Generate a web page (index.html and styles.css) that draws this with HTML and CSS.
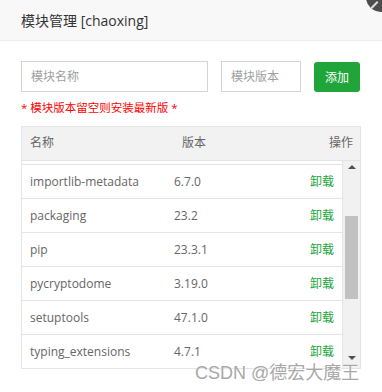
FILE: index.html
```html
<!DOCTYPE html>
<html lang="zh-CN">
  <head>
    <meta charset="UTF-8" />
    <meta name="viewport" content="width=device-width, initial-scale=1.0" />
    <title>模块管理</title>
    <link rel="stylesheet" href="styles.css">
  </head>
  <body>
    <div class="layer">
      <div class="layer-title">模块管理 [chaoxing]</div>
      <span class="layer-close"></span>

      <div class="layer-content">
        <div class="form-row">
          <input class="input input-name" type="text" placeholder="模块名称" />
          <input class="input input-version" type="text" placeholder="模块版本" />
          <button class="btn btn-success">添加</button>
        </div>
        <p class="tips">* 模块版本留空则安装最新版 *</p>

        <div class="table-box">
          <table class="table table-head">
            <colgroup>
              <col class="col-name" />
              <col class="col-version" />
              <col />
            </colgroup>
            <thead>
              <tr>
                <th>名称</th>
                <th>版本</th>
                <th class="text-right">操作</th>
              </tr>
            </thead>
          </table>

          <div class="table-body">
            <div class="table-scroll">
              <table class="table">
                <colgroup>
                  <col class="col-name" />
                  <col class="col-version" />
                  <col />
                </colgroup>
                <tbody>
                  <tr><td>importlib-metadata</td><td>6.7.0</td><td class="text-right"><a class="btlink">卸载</a></td></tr>
                  <tr><td>packaging</td><td>23.2</td><td class="text-right"><a class="btlink">卸载</a></td></tr>
                  <tr><td>pip</td><td>23.3.1</td><td class="text-right"><a class="btlink">卸载</a></td></tr>
                  <tr><td>pycryptodome</td><td>3.19.0</td><td class="text-right"><a class="btlink">卸载</a></td></tr>
                  <tr><td>setuptools</td><td>47.1.0</td><td class="text-right"><a class="btlink">卸载</a></td></tr>
                  <tr><td>typing_extensions</td><td>4.7.1</td><td class="text-right"><a class="btlink">卸载</a></td></tr>
                </tbody>
              </table>
            </div>
            <div class="scrollbar">
              <span class="arrow arrow-up"></span>
              <span class="thumb"></span>
              <span class="arrow arrow-down"></span>
            </div>
          </div>
        </div>
      </div>

      <div class="watermark">CSDN @德宏大魔王</div>
    </div>
  </body>
</html>
```

FILE: styles.css
```css
* {
  margin: 0;
  padding: 0;
  box-sizing: border-box;
}

body {
  font-family: "Open Sans", "Noto Sans CJK SC", sans-serif;
  background: #fff;
  color: #666;
  overflow: hidden;
}

.layer {
  position: relative;
  width: 382px;
  height: 392px;
}

.layer-title {
  height: 41px;
  line-height: 42px;
  padding-left: 21px;
  font-size: 14px;
  color: #333;
  background: #f8f8f8;
  border-bottom: 1px solid #eee;
}

/* close button, mostly outside the dialog */
.layer-close {
  position: absolute;
  top: -18px;
  left: 366px;
  width: 30px;
  height: 30px;
  border-radius: 50%;
  background: #4d4d4d;
}

.layer-close::before {
  content: "";
  position: absolute;
  left: 4px;
  top: 22px;
  width: 9px;
  height: 2px;
  background: #ddd;
  transform: rotate(-45deg);
}

.layer-content {
  padding: 20px 21px 0;
}

.form-row {
  display: flex;
  align-items: center;
  height: 31px;
}

.input {
  height: 31px;
  border: 1px solid #d4d4d4;
  padding-left: 9px;
  font-family: inherit;
  font-size: 12px;
  color: #555;
  outline: none;
}

.input::placeholder {
  color: #a0a0a0;
}

.input-name {
  width: 187px;
}

.input-version {
  width: 80px;
  margin-left: 13px;
}

.btn {
  width: 46px;
  height: 30px;
  margin-left: 13px;
  margin-top: 1px;
  border: none;
  border-radius: 3px;
  font-family: inherit;
  font-size: 12px;
  cursor: pointer;
}

.btn-success {
  background: #20a53a;
  color: #fff;
}

.tips {
  margin-top: 8px;
  font-size: 11.5px;
  line-height: 15px;
  color: #f00;
}

.table-box {
  margin-top: 11px;
  width: 340px;
  border: 1px solid #e4e4e4;
}

.table {
  width: 100%;
  border-collapse: collapse;
  table-layout: fixed;
  font-size: 12px;
}

.col-name {
  width: 45%;
}

.col-version {
  width: 30%;
}

.table th,
.table td {
  height: 34px;
  padding: 0 8px;
  line-height: 20px;
  text-align: left;
  font-weight: normal;
  white-space: nowrap;
}

.table-head {
  background: #f2f2f2;
  border-bottom: 1px solid #e4e4e4;
}

.table-head th {
  height: 33px;
  color: #666;
}

.table-head th.text-right {
  padding-right: 7px;
}

.table .text-right {
  text-align: right;
}

.table td {
  color: #666;
  border-bottom: 1px solid #e4e4e4;
}

.table-body {
  display: flex;
  height: 207px;
  overflow: hidden;
}

.table-scroll {
  width: 321px;
  border-right: 1px solid #e4e4e4;
}

/* body is scrolled: only the bottom edge of the previous row shows */
.table-scroll .table {
  margin-top: 3px;
  border-top: 1px solid #e4e4e4;
}

.table-scroll td {
  height: 34px;
  padding-top: 2px;
}

.btlink {
  color: #20a53a;
  text-decoration: none;
}

.scrollbar {
  position: relative;
  width: 17px;
  background: #f1f1f1;
}

.thumb {
  position: absolute;
  top: 55px;
  left: 2px;
  width: 13px;
  height: 83px;
  background: #c1c1c1;
}

.arrow {
  position: absolute;
  left: 5px;
  width: 0;
  height: 0;
  border-left: 4px solid transparent;
  border-right: 4px solid transparent;
}

.arrow-up {
  top: 4px;
  border-bottom: 4px solid #505050;
}

.arrow-down {
  bottom: 8px;
  border-top: 4px solid #505050;
}

.watermark {
  position: absolute;
  left: 195px;
  top: 361px;
  font-family: "Liberation Sans", "Noto Sans CJK SC", sans-serif;
  font-size: 18px;
  line-height: 24px;
  color: #a8a8a8;
  text-shadow: 0 0 2px #fff;
  white-space: nowrap;
}
```
